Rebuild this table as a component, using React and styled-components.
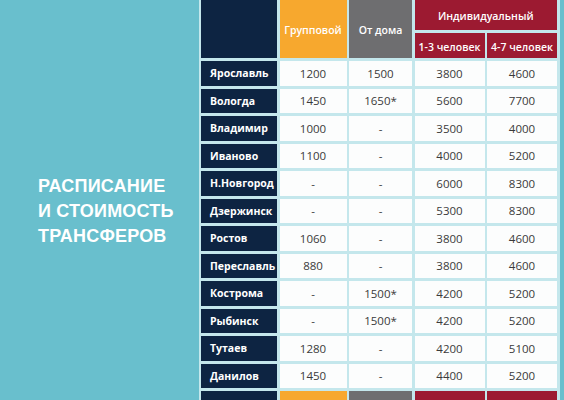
import styled, { createGlobalStyle } from "styled-components";

const GlobalStyle = createGlobalStyle`
  html, body {
    margin: 0;
    padding: 0;
    background: #69bfcd;
  }
`;

const rows = [
  ["Ярославль", "1200", "1500", "3800", "4600"],
  ["Вологда", "1450", "1650*", "5600", "7700"],
  ["Владимир", "1000", "-", "3500", "4000"],
  ["Иваново", "1100", "-", "4000", "5200"],
  ["Н.Новгород", "-", "-", "6000", "8300"],
  ["Дзержинск", "-", "-", "5300", "8300"],
  ["Ростов", "1060", "-", "3800", "4600"],
  ["Переславль", "880", "-", "3800", "4600"],
  ["Кострома", "-", "1500*", "4200", "5200"],
  ["Рыбинск", "-", "1500*", "4200", "5200"],
  ["Тутаев", "1280", "-", "4200", "5100"],
  ["Данилов", "1450", "-", "4400", "5200"],
];

const colors = {
  navy: "#0d2442",
  orange: "#f7a82e",
  gray: "#6e6e70",
  red: "#9c1a31",
};

export default function App() {
  return (
    <Page>
      <GlobalStyle />
      <Side>
        <Title>
          РАСПИСАНИЕ
          <br />И СТОИМОСТЬ
          <br />
          ТРАНСФЕРОВ
        </Title>
      </Side>
      <TableWrap>
        <Table>
          <HeadCell $bg={colors.navy} $row="1 / span 2" $col="1" />
          <HeadCell $bg={colors.orange} $row="1 / span 2" $col="2">
            Групповой
          </HeadCell>
          <HeadCell $bg={colors.gray} $row="1 / span 2" $col="3">
            От дома
          </HeadCell>
          <HeadCell $bg={colors.red} $row="1" $col="4 / span 2">
            Индивидуальный
          </HeadCell>
          <HeadCell $bg={colors.red} $row="2" $col="4">
            1-3 человек
          </HeadCell>
          <HeadCell $bg={colors.red} $row="2" $col="5">
            4-7 человек
          </HeadCell>

          {rows.map(([city, ...vals]) => (
            <Row key={city}>
              <City>{city}</City>
              {vals.map((v, i) => (
                <Value key={i}>{v}</Value>
              ))}
            </Row>
          ))}

          <Row>
            <Foot $bg={colors.navy} />
            <Foot $bg={colors.orange} />
            <Foot $bg={colors.gray} />
            <Foot $bg={colors.red} />
            <Foot $bg={colors.red} />
          </Row>
        </Table>
      </TableWrap>
    </Page>
  );
}

const Page = styled.div`
  width: 564px;
  height: 400px;
  overflow: hidden;
  display: flex;
  background: #69bfcd;
`;

const Side = styled.div`
  width: 199px;
  flex-shrink: 0;
  padding: 174px 0 0 38px;
  box-sizing: border-box;
`;

const Title = styled.h1`
  margin: 0;
  color: #fff;
  font-family: "Liberation Sans", Arial, sans-serif;
  font-weight: 700;
  font-size: 18px;
  line-height: 25px;
  letter-spacing: 0.2px;
`;

const TableWrap = styled.div`
  width: 361px;
  flex-shrink: 0;
  background: #c4e7ec;
  padding: 0 3px 0 2px;
  box-sizing: border-box;
  align-self: flex-start;
`;

const Table = styled.div`
  display: grid;
  grid-template-columns: 76px 67px 63px 70px 70px;
  grid-template-rows: 30px 25px;
  grid-auto-rows: 24.5px;
  column-gap: 2.5px;
  row-gap: 3px;
  font-family: "Open Sans", "Noto Sans", sans-serif;
`;

const Row = styled.div`
  display: contents;
`;

const HeadCell = styled.div`
  grid-row: ${(p) => p.$row};
  grid-column: ${(p) => p.$col};
  background: ${(p) => p.$bg};
  color: #fff;
  font-size: 10.5px;
  font-weight: 600;
  display: flex;
  align-items: center;
  justify-content: center;
  padding-top: 2px;
`;

const City = styled.div`
  background: ${colors.navy};
  color: #fff;
  font-size: 10.5px;
  font-weight: 700;
  display: flex;
  align-items: center;
  padding-left: 9px;
`;

const Value = styled.div`
  background: #fcfdfd;
  color: #3a3a3a;
  font-size: 11.5px;
  display: flex;
  align-items: center;
  justify-content: center;
`;

const Foot = styled.div`
  background: ${(p) => p.$bg};
`;
